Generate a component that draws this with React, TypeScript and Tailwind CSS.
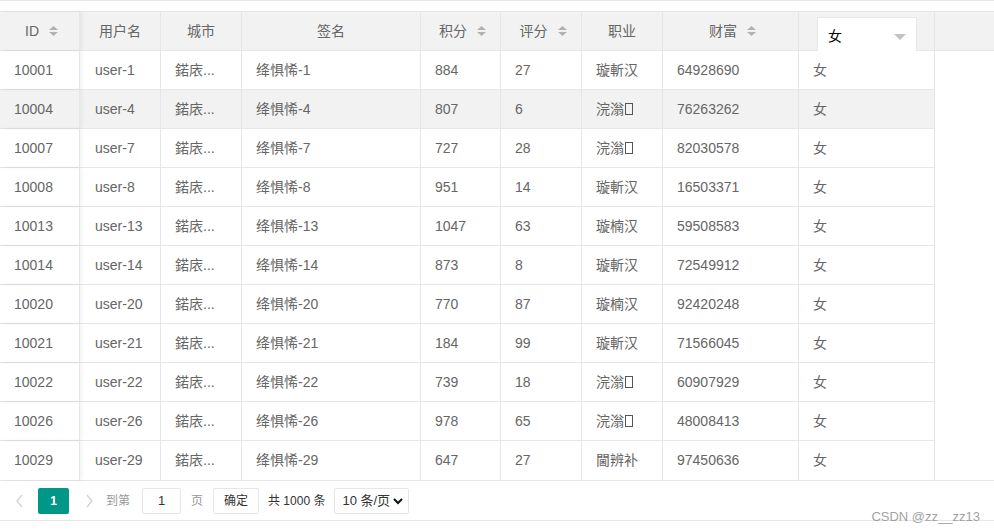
import React from "react";

const A = "璇斬汉";
const B = "璇楠汉";
const C = "浣滃#";
const D = "閫辨补";

const rows = [
  ["10001", "user-1", "鍩庡...", "绛惧悕-1", "884", "27", A, "64928690", "女"],
  ["10004", "user-4", "鍩庡...", "绛惧悕-4", "807", "6", C, "76263262", "女"],
  ["10007", "user-7", "鍩庡...", "绛惧悕-7", "727", "28", C, "82030578", "女"],
  ["10008", "user-8", "鍩庡...", "绛惧悕-8", "951", "14", A, "16503371", "女"],
  ["10013", "user-13", "鍩庡...", "绛惧悕-13", "1047", "63", B, "59508583", "女"],
  ["10014", "user-14", "鍩庡...", "绛惧悕-14", "873", "8", A, "72549912", "女"],
  ["10020", "user-20", "鍩庡...", "绛惧悕-20", "770", "87", B, "92420248", "女"],
  ["10021", "user-21", "鍩庡...", "绛惧悕-21", "184", "99", A, "71566045", "女"],
  ["10022", "user-22", "鍩庡...", "绛惧悕-22", "739", "18", C, "60907929", "女"],
  ["10026", "user-26", "鍩庡...", "绛惧悕-26", "978", "65", C, "48008413", "女"],
  ["10029", "user-29", "鍩庡...", "绛惧悕-29", "647", "27", D, "97450636", "女"],
];

const widths = ["w-[80px]", "w-[81px]", "w-[81px]", "w-[179px]", "w-[80px]", "w-[81px]", "w-[81px]", "w-[136px]", "w-[136px]"];

function Sort() {
  return (
    <svg width="11" height="12" viewBox="0 0 11 12" className="ml-[9px] shrink-0">
      <path d="M1 5 L5.5 1 L10 5 Z" fill="#b2b2b2" />
      <path d="M1 7 L5.5 11 L10 7 Z" fill="#b2b2b2" />
    </svg>
  );
}

const headers: { t: string; s?: boolean }[] = [
  { t: "ID", s: true },
  { t: "用户名" },
  { t: "城市" },
  { t: "签名" },
  { t: "积分", s: true },
  { t: "评分", s: true },
  { t: "职业" },
  { t: "财富", s: true },
];

function Cell({ c }: { c: string }) {
  if (c.endsWith("#")) {
    return (
      <span className="flex items-center">
        {c.slice(0, -1)}
        <span className="inline-block w-[8px] h-[12px] border border-[#555] ml-[1px]" />
      </span>
    );
  }
  return <>{c}</>;
}

export default function App() {
  const font = { fontFamily: '"Liberation Sans", "Noto Sans CJK SC", sans-serif' };
  return (
    <div className="w-[994px] h-[531px] bg-white overflow-hidden text-[14px] text-[#666]" style={font}>
      <div className="border-t border-[#e6e6e6] h-[11px]" />
      {/* header */}
      <div className="flex h-[40px] bg-[#f2f2f2] border-t border-b border-[#e6e6e6]">
        {headers.map((h, i) => (
          <div
            key={i}
            className={`${widths[i]} shrink-0 border-r border-[#e6e6e6] flex items-center justify-center ${i === 0 ? "relative shadow-[2px_0_4px_rgba(0,0,0,0.06)] z-10" : ""}`}
          >
            <span className={h.s ? "pl-[5px]" : ""}>{h.t}</span>
            {h.s && <Sort />}
          </div>
        ))}
        <div className="w-[136px] shrink-0 border-r border-[#e6e6e6] relative">
          <div className="absolute left-[18px] top-[5px] w-[100px] h-[34px] bg-white border border-b-0 border-[#e6e6e6] flex items-center pl-[10px] text-black">
            <span className="mt-[4px]">女</span>
            <svg width="12" height="7" viewBox="0 0 12 7" className="absolute right-[10px] top-[16px]">
              <path d="M0 0 L12 0 L6 6 Z" fill="#c2c2c2" />
            </svg>
          </div>
        </div>
        <div className="flex-1" />
      </div>
      {/* body */}
      <div className="border-b border-[#e6e6e6]">
        {rows.map((r, ri) => (
          <div key={ri} className={`flex h-[39px] w-[935px] ${ri < rows.length - 1 ? "border-b border-[#e6e6e6]" : ""} ${ri === 1 ? "bg-[#f2f2f2]" : "bg-white"}`}>
            {r.map((c, ci) => (
              <div
                key={ci}
                className={`${widths[ci]} shrink-0 border-r border-[#e6e6e6] flex items-center pl-[14px] whitespace-nowrap overflow-hidden ${ci === 0 ? "relative shadow-[2px_0_4px_rgba(0,0,0,0.05)] z-10" : ""} ${ci === 1 ? "pl-[15px]" : ""}`}
              >
                <Cell c={c} />
              </div>
            ))}
          </div>
        ))}
      </div>
      {/* pagination */}
      <div className="flex items-center h-[40px] border-b border-[#e6e6e6] text-[12px] pl-[13px]">
        <svg width="10" height="14" viewBox="0 0 10 14" className="ml-[2px]">
          <path d="M7 1 L2 7 L7 13" stroke="#d2d2d2" strokeWidth="1.3" fill="none" />
        </svg>
        <div className="ml-[13px] w-[31px] h-[26px] bg-[#009688] text-white rounded-[2px] flex items-center justify-center text-[12px] font-bold">1</div>
        <svg width="10" height="14" viewBox="0 0 10 14" className="ml-[15px]">
          <path d="M3 1 L8 7 L3 13" stroke="#d2d2d2" strokeWidth="1.3" fill="none" />
        </svg>
        <span className="ml-[12px] text-[#999]">到第</span>
        <div className="ml-[12px] w-[39px] h-[26px] border border-[#e6e6e6] rounded-[2px] flex items-center justify-center text-[#333] text-[13px]">1</div>
        <span className="ml-[10px] text-[#999]">页</span>
        <div className="ml-[10px] w-[46px] h-[26px] border border-[#e6e6e6] rounded-[2px] flex items-center justify-center text-[#333] text-[12px]">确定</div>
        <span className="ml-[9px] text-[#333] text-[12px]">共 1000 条</span>
        <div className="ml-[9px] w-[75px] h-[26px] border border-[#e6e6e6] rounded-[2px] flex items-center pl-[7px] text-[#333] text-[13px] relative">
          10 条/页
          <svg width="10" height="7" viewBox="0 0 10 7" className="absolute right-[5px] top-[9px]">
            <path d="M1 1 L5 5 L9 1" stroke="#111" strokeWidth="2" fill="none" />
          </svg>
        </div>
      </div>
      <div className="relative">
        <span className="absolute right-[14px] -top-[14px] text-[13px] text-[#999] opacity-90" style={{ fontFamily: '"Liberation Sans", sans-serif' }}>CSDN @zz__zz13</span>
      </div>
    </div>
  );
}
